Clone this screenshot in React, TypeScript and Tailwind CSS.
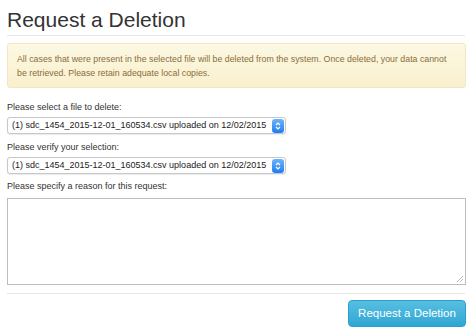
import React from 'react';

const FILE_LABEL = '(1) sdc_1454_2015-12-01_160534.csv uploaded on 12/02/2015';

const FakeSelect = () => (
  <div className="flex h-[17px] w-[279px] items-center justify-between overflow-hidden rounded-[3px] border border-[#c8c8c8] bg-white pl-[4px] pr-[1px] shadow-[0_1px_1px_rgba(0,0,0,0.08)]">
    <span className="whitespace-nowrap text-[9px] leading-none text-[#222]">{FILE_LABEL}</span>
    <span className="flex h-[14px] w-[12px] shrink-0 items-center justify-center rounded-[3px] bg-gradient-to-b from-[#6cb3fa] to-[#1a7ef0]">
      <svg width="6" height="10" viewBox="0 0 6 10" fill="none" stroke="white" strokeWidth="1.2">
        <path d="M1 4 L3 2 L5 4" />
        <path d="M1 6 L3 8 L5 6" />
      </svg>
    </span>
  </div>
);

export default function App() {
  return (
    <div className="min-h-screen bg-white px-[7px] pt-[8px] font-['Liberation_Sans',Arial,sans-serif] text-[#333]">
      <h2 className="text-[21px] font-medium leading-[24px] text-[#333]">Request a Deletion</h2>
      <div className="mt-[3px] h-px w-[458px] bg-[#e6e6e6]" />
      <div className="mt-[7px] w-[459px] rounded-[3px] border border-[#f3e7bd] bg-gradient-to-b from-[#fcf8e3] to-[#f9f0cd] pb-[7px] pl-[9px] pr-[12px] pt-[8px] text-[8.8px] leading-[14px] text-[#8a6d3b]">
        All cases that were present in the selected file will be deleted from the system. Once deleted, your data cannot be retrieved. Please retain adequate local copies.
      </div>
      <div className="mt-[13px] text-[9px] leading-[12px] text-[#333]">Please select a file to delete:</div>
      <div className="mt-[4px]">
        <FakeSelect />
      </div>
      <div className="mt-[7px] text-[9px] leading-[12px] text-[#333]">Please verify your selection:</div>
      <div className="mt-[4px]">
        <FakeSelect />
      </div>
      <div className="mt-[6px] text-[9px] leading-[12px] text-[#333]">Please specify a reason for this request:</div>
      <div className="relative mt-[6px] h-[87px] w-[459px] border border-[#bdbdbd] bg-white">
        <svg className="absolute bottom-[1px] right-[1px]" width="8" height="8" viewBox="0 0 8 8" stroke="#aaa" strokeWidth="0.8">
          <path d="M7 1 L1 7" />
          <path d="M7 4 L4 7" />
        </svg>
      </div>
      <div className="mt-[8px] h-px w-[458px] bg-[#e6e6e6]" />
      <div className="mt-[6px] flex w-[459px] justify-end">
        <button className="h-[27px] w-[118px] rounded-[4px] border border-[#2aa0cf] bg-gradient-to-b from-[#56bfe2] to-[#2fa6d4] text-[11.5px] text-white">
          Request a Deletion
        </button>
      </div>
    </div>
  );
}
